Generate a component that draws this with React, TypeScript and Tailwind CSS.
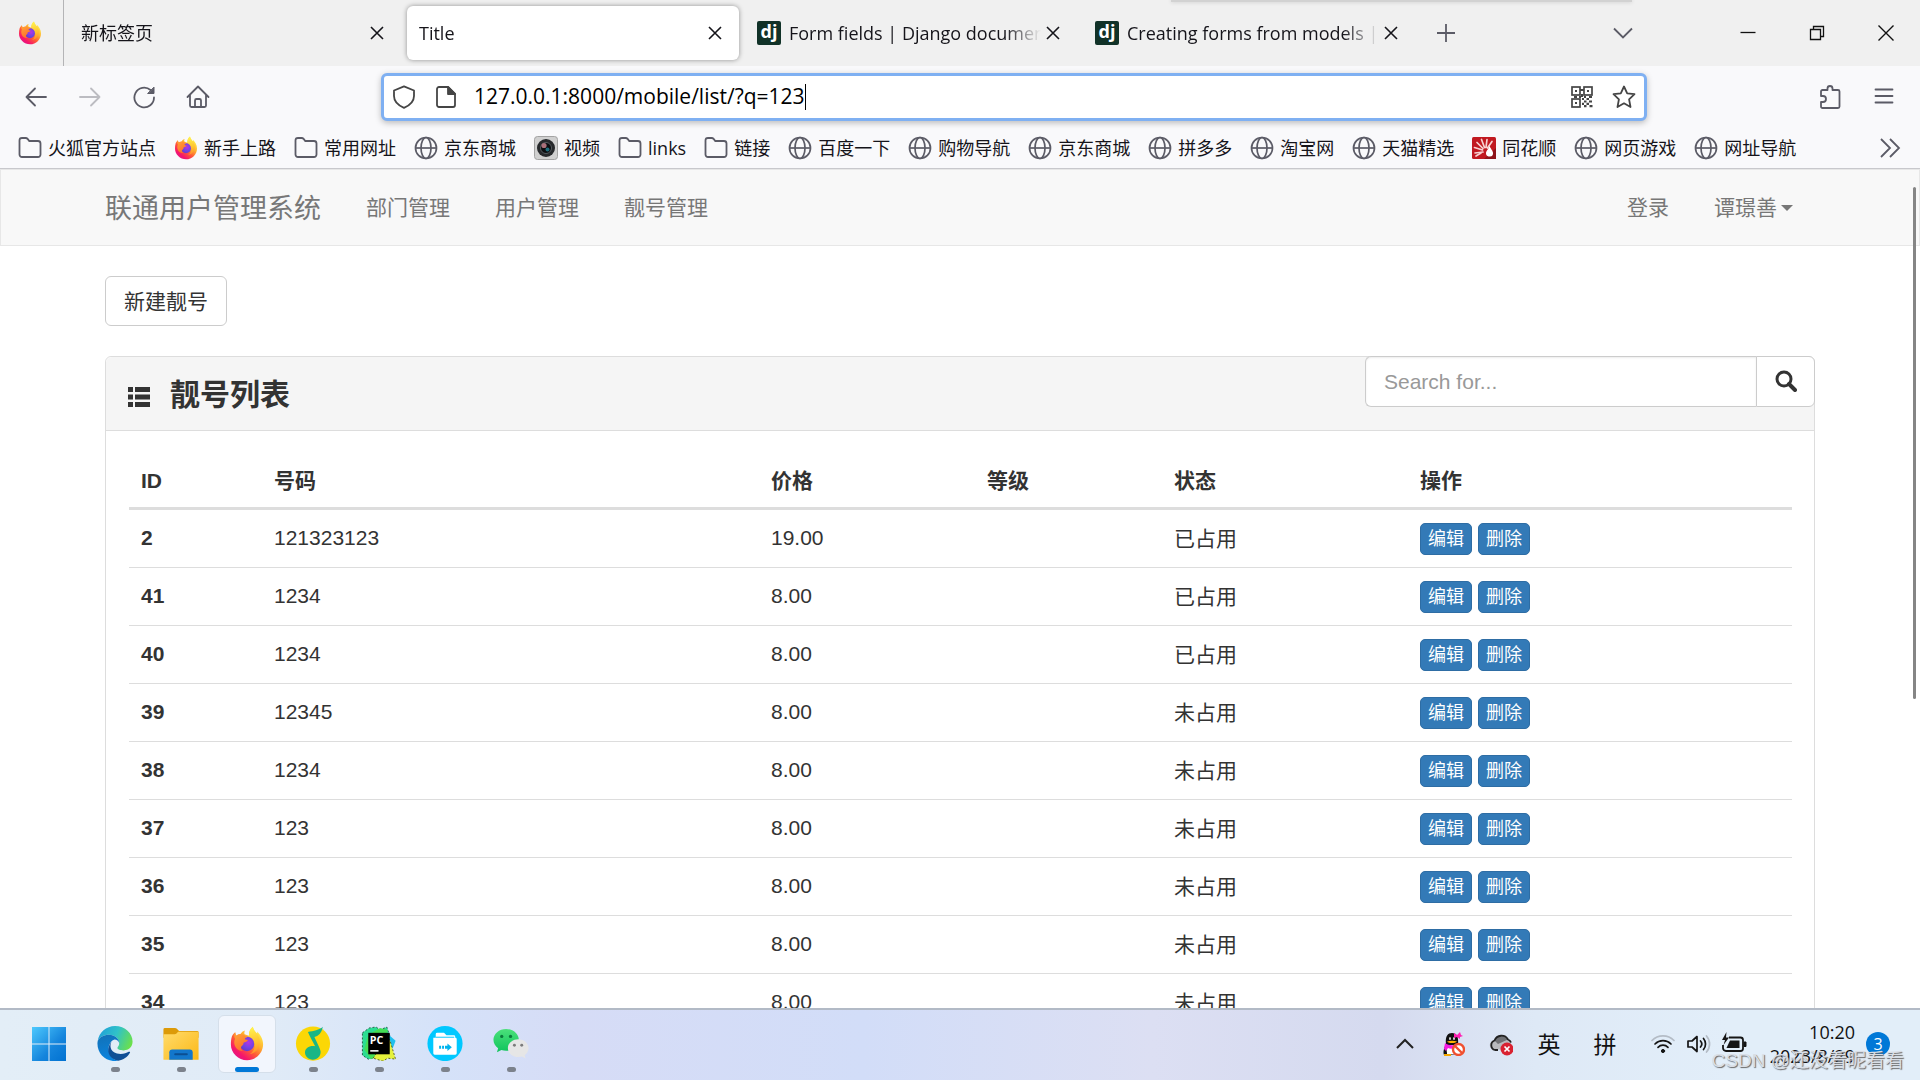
import type { ReactNode } from 'react';

interface Mobile {
  id: number;
  number: string;
  price: string;
  level: string;
  status: string;
}

const mobiles: Mobile[] = [
  { id: 2, number: '121323123', price: '19.00', level: '', status: '已占用' },
  { id: 41, number: '1234', price: '8.00', level: '', status: '已占用' },
  { id: 40, number: '1234', price: '8.00', level: '', status: '已占用' },
  { id: 39, number: '12345', price: '8.00', level: '', status: '未占用' },
  { id: 38, number: '1234', price: '8.00', level: '', status: '未占用' },
  { id: 37, number: '123', price: '8.00', level: '', status: '未占用' },
  { id: 36, number: '123', price: '8.00', level: '', status: '未占用' },
  { id: 35, number: '123', price: '8.00', level: '', status: '未占用' },
  { id: 34, number: '123', price: '8.00', level: '', status: '未占用' },
];

type BookmarkIcon = 'folder' | 'globe' | 'firefox' | 'camera' | 'stock';

const bookmarks: { icon: BookmarkIcon; label: string }[] = [
  { icon: 'folder', label: '火狐官方站点' },
  { icon: 'firefox', label: '新手上路' },
  { icon: 'folder', label: '常用网址' },
  { icon: 'globe', label: '京东商城' },
  { icon: 'camera', label: '视频' },
  { icon: 'folder', label: 'links' },
  { icon: 'folder', label: '链接' },
  { icon: 'globe', label: '百度一下' },
  { icon: 'globe', label: '购物导航' },
  { icon: 'globe', label: '京东商城' },
  { icon: 'globe', label: '拼多多' },
  { icon: 'globe', label: '淘宝网' },
  { icon: 'globe', label: '天猫精选' },
  { icon: 'stock', label: '同花顺' },
  { icon: 'globe', label: '网页游戏' },
  { icon: 'globe', label: '网址导航' },
];

/* ---------- Icons ---------- */

function FirefoxLogo({ className }: { className: string }) {
  return (
    <svg viewBox="0 0 36 36" className={className} aria-hidden="true">
      <defs>
        <linearGradient id="ffBody" x1="0.85" y1="0.1" x2="0.2" y2="0.95">
          <stop offset="0" stopColor="#fff44f" />
          <stop offset="0.35" stopColor="#ffb02e" />
          <stop offset="0.6" stopColor="#ff5a36" />
          <stop offset="0.85" stopColor="#f5156c" />
          <stop offset="1" stopColor="#e31587" />
        </linearGradient>
        <radialGradient id="ffGlobe" cx="0.6" cy="0.4" r="0.7">
          <stop offset="0" stopColor="#b833e1" />
          <stop offset="0.5" stopColor="#7542e5" />
          <stop offset="1" stopColor="#5b3fc4" />
        </radialGradient>
        <linearGradient id="ffHead" x1="0.2" y1="0" x2="0.7" y2="1">
          <stop offset="0" stopColor="#ffa436" />
          <stop offset="1" stopColor="#ff6a2b" />
        </linearGradient>
        <linearGradient id="ffFlame" x1="0.5" y1="0" x2="0.6" y2="1">
          <stop offset="0" stopColor="#fff44f" />
          <stop offset="0.6" stopColor="#ffc02e" />
          <stop offset="1" stopColor="#ff8a2b" />
        </linearGradient>
      </defs>
      <path d="M2.6 10.5C3.4 8.6 4.6 7.2 5.9 6.3c0 1.2.4 2.5 1.2 3.6 1-.8 2.6-1.5 4.2-1.6C12.6 6 14.4 5 16 4.6c-.8 1.3-.9 2.6-.5 3.8L20 10c-.2-3.800 1-7 4-9.300.6 3 2.200 5 4.300 7 .2-.6.2-1.200 0-2 3.300 3 6.200 7.600 6.200 13 0 9-7.300 16.300-16.400 16.300S1.500 27.700 1.500 18.900c0-3 .2-5.800 1.100-8.400z" fill="url(#ffBody)" />
      <path d="M20 10.500c-.3-4 1-7.400 4-9.800.8 4 3.400 6 5.400 9.300 2.300 3.800 2.500 9-.2 13.400-1.800 3-5 4.900-8.200 5.200 4.600-2.800 6-7.500 4.600-11.800-1-3-3-4.800-5.600-6.300z" fill="url(#ffFlame)" />
      <circle cx="18" cy="18.400" r="7.400" fill="url(#ffGlobe)" />
      <path d="M5.900 6.300c0 1.200.4 2.500 1.200 3.600 2.200-1.500 5-1.900 7.600-.9 1.200.6 2.500 1.700 3.400 3-1.400 0-2.400.5-2.200 1.500.8.500 2 .8 3.100.8-.7 1.500-2.400 2.300-4.600 2.900.2 1.400-.4 2.300-1.400 3-2 1.600-1.200 4 1 5.400-4.300.3-8.500-2.800-9-7.600-.2-2.200.3-3.700.9-4.700-1.200-2-1.200-4.800 0-7z" fill="url(#ffHead)" />
    </svg>
  );
}

function DjangoLogo() {
  return (
    <span className="flex h-6 w-6 shrink-0 items-center justify-center rounded-xs bg-[#113228] pb-1 text-lg leading-5 font-bold text-white">
      dj
    </span>
  );
}

function CloseIcon() {
  return (
    <svg viewBox="0 0 24 24" className="h-6 w-6" fill="none" stroke="#15141a" strokeWidth="1.600">
      <path d="M6 6l12 12M18 6L6 18" />
    </svg>
  );
}

function GlobeIcon() {
  return (
    <svg viewBox="0 0 24 24" className="h-6 w-6" fill="none" stroke="#5b5b66" strokeWidth="1.700">
      <circle cx="12" cy="12" r="10.500" />
      <ellipse cx="12" cy="12" rx="5" ry="10.500" />
      <path d="M1.500 12h21" />
    </svg>
  );
}

function FolderIcon() {
  return (
    <svg viewBox="0 0 24 24" className="h-6 w-6" fill="none" stroke="#5b5b66" strokeWidth="1.800">
      <path d="M1.500 18.500v-14A2.500 2.500 0 0 1 4 2h3.600c.8 0 1.500.3 2 .9L11.300 5h8.700A2.500 2.500 0 0 1 22.500 7.500v11A2.500 2.500 0 0 1 20 21H4a2.500 2.500 0 0 1-2.500-2.500z" />
    </svg>
  );
}

function CameraIcon() {
  return (
    <svg viewBox="0 0 24 24" className="h-6 w-6">
      <rect x="0.500" y="0.500" width="23" height="23" rx="3" fill="#d0d0d0" stroke="#a3a3a3" />
      <circle cx="12" cy="12" r="9" fill="#26282b" />
      <circle cx="12" cy="12" r="5.500" fill="#0b0d10" stroke="#555b60" />
      <circle cx="10" cy="9.500" r="2.600" fill="#a9707a" />
      <circle cx="13.500" cy="13.500" r="2" fill="#1d6c7c" />
    </svg>
  );
}

function StockIcon() {
  return (
    <svg viewBox="0 0 24 24" className="h-6 w-6">
      <rect y="1" width="24" height="22" rx="1.500" fill="#c11920" />
      <path d="M12 23h12V12z" fill="#8e1419" />
      <g stroke="#f7d3d3" strokeWidth="1.700" fill="none" strokeLinecap="round">
        <path d="M11 16L3 17M10.500 14L2.500 11.500M11 12.500L5 6.500M12.500 11.500L9.500 3.500M14 11.500L15 3.500M15.500 12L20 5.500" />
        <path d="M9 17l-5 3" />
      </g>
      <path d="M17.500 10c2 4 4 5.500 3.500 8s-2.500 2.500-3.500 2.500-3.500-.5-3.500-3 2-3.500 3.500-7.500z" fill="#fff" />
    </svg>
  );
}

function BookmarkGlyph({ icon }: { icon: BookmarkIcon }) {
  if (icon === 'folder') return <FolderIcon />;
  if (icon === 'globe') return <GlobeIcon />;
  if (icon === 'camera') return <CameraIcon />;
  if (icon === 'stock') return <StockIcon />;
  return <FirefoxLogo className="h-6 w-6" />;
}

function QrIcon() {
  return (
    <svg viewBox="0 0 24 24" className="h-6 w-6" fill="none" stroke="#454545" strokeWidth="1.700">
      <rect x="2" y="2" width="8" height="8" />
      <rect x="14" y="2" width="8" height="8" />
      <rect x="2" y="14" width="8" height="8" />
      <path d="M5 6h2M17 6h2M5 18h2" strokeWidth="2" />
      <path d="M10 5h4M4 12h3M9 12h2M14 12h2M19 12h3M12 14h2M16.500 14h2.500M14 16.500h2.500M19 16.500h3M12 18.800h2M16.500 18.800h2.500M14 21.200h2.500M19.500 21.200h3M12 9v3" strokeWidth="2.200" />
    </svg>
  );
}

/* ---------- Browser chrome ---------- */

interface TabProps {
  title: string;
  icon?: ReactNode;
  active?: boolean;
}

function Tab({ title, icon, active }: TabProps) {
  return (
    <div className="flex h-full w-[338px] min-w-0 items-stretch px-[3px] py-[6px]">
      <div
        className={`flex min-w-0 flex-1 items-center rounded-md px-3 ${
          active ? 'bg-white shadow-[0_0_5px_rgba(0,0,0,0.4)]' : ''
        }`}
      >
        {icon && <span className="mr-2 flex">{icon}</span>}
        <span className="min-w-0 flex-1 overflow-hidden text-lg whitespace-nowrap [mask-image:linear-gradient(to_left,transparent,black_36px)]">
          {title}
        </span>
        <button type="button" aria-label="关闭标签页" className="shrink-0">
          <CloseIcon />
        </button>
      </div>
    </div>
  );
}

function TabBar() {
  return (
    <div className="relative flex h-[66px] items-center bg-[#f0f0f0]">
      <div className="absolute top-0 right-[15%] left-[61%] h-[2px] bg-[#d2d2d2] shadow-[0_0_4px_rgba(0,0,0,0.2)]" />
      <button type="button" aria-label="Firefox View" className="mr-[2px] flex h-full w-16 items-center border-r border-[#b4b4b6] pl-[18px]">
        <FirefoxLogo className="h-6 w-6" />
      </button>
      <Tab title="新标签页" />
      <Tab title="Title" active />
      <Tab title="Form fields | Django documentation" icon={<DjangoLogo />} />
      <Tab title="Creating forms from models | Django documentation" icon={<DjangoLogo />} />
      <button type="button" aria-label="新建标签页" className="flex w-14 justify-center">
        <svg viewBox="0 0 24 24" className="h-6 w-6" fill="none" stroke="#5b5b66" strokeWidth="1.800">
          <path d="M12 3v18M3 12h18" />
        </svg>
      </button>
      <div className="ml-auto flex h-full items-center">
        <button type="button" aria-label="列出所有标签页" className="mr-[62px] flex w-14 justify-center">
          <svg viewBox="0 0 24 24" className="h-6 w-6" fill="none" stroke="#5b5b66" strokeWidth="1.800">
            <path d="M3 7.500l9 9 9-9" />
          </svg>
        </button>
        <button type="button" aria-label="最小化" className="flex w-[69px] justify-center">
          <svg viewBox="0 0 24 24" className="h-6 w-6" fill="none" stroke="#111" strokeWidth="1.300">
            <path d="M4.500 11.500h15" />
          </svg>
        </button>
        <button type="button" aria-label="还原" className="flex w-[69px] justify-center">
          <svg viewBox="0 0 24 24" className="h-6 w-6" fill="none" stroke="#111" strokeWidth="1.300">
            <path d="M5.500 8.500h10v10h-10zM8.500 8.500v-3h10v10h-3" />
          </svg>
        </button>
        <button type="button" aria-label="关闭" className="flex w-[69px] justify-center">
          <svg viewBox="0 0 24 24" className="h-6 w-6" fill="none" stroke="#111" strokeWidth="1.400">
            <path d="M4.500 4.500l15 15M19.500 4.500l-15 15" />
          </svg>
        </button>
      </div>
    </div>
  );
}

function ToolButton({ label, children }: { label: string; children: ReactNode }) {
  return (
    <button type="button" aria-label={label} className="flex w-[54px] shrink-0 justify-center">
      <svg
        viewBox="0 0 24 24"
        className="h-6 w-6"
        fill="none"
        stroke="#5b5b66"
        strokeWidth="1.800"
        strokeLinecap="round"
        strokeLinejoin="round"
      >
        {children}
      </svg>
    </button>
  );
}

function Toolbar() {
  return (
    <div className="flex h-[61px] items-center bg-[#f9f9fb] px-[9px]">
      <ToolButton label="后退">
        <path d="M22 12H2.500M11 3.500L2.500 12l8.500 8.500" />
      </ToolButton>
      <ToolButton label="前进">
        <path d="M2 12h19.500M13 3.500l8.500 8.500-8.500 8.500" stroke="#bcbcc1" />
      </ToolButton>
      <ToolButton label="刷新">
        <path d="M22 12.500a9.800 9.800 0 1 1-3.500-7.500" />
        <path d="M22 2.500v6h-6z" fill="#5b5b66" strokeWidth="1" />
      </ToolButton>
      <ToolButton label="主页">
        <path d="M1.500 12L12 1.500 22.500 12M4 10v10.500A1.500 1.500 0 0 0 5.500 22h13a1.500 1.500 0 0 0 1.500-1.500V10" />
        <path d="M9 22v-6.500a1.500 1.500 0 0 1 1.500-1.500h3a1.500 1.500 0 0 1 1.500 1.500V22" />
      </ToolButton>

      {/* Address bar */}
      <div className="mx-[156px] flex h-12 min-w-0 flex-1 items-center rounded-md border-[3px] border-[#7fb0f2] bg-white px-2 shadow-[0_2px_6px_rgba(0,0,0,0.25)]">
        <svg viewBox="0 0 24 24" className="h-6 w-6 shrink-0" fill="none" stroke="#454545" strokeWidth="1.800" strokeLinejoin="round">
          <path d="M12 1.300l10 4.200v5.500c0 6-4.500 9.500-10 11.800C6.500 20.500 2 17 2 11V5.500z" />
        </svg>
        <svg viewBox="0 0 24 24" className="ml-[18px] h-6 w-6 shrink-0" fill="none" stroke="#454545" strokeWidth="1.800" strokeLinejoin="round">
          <path d="M5 2h9l7 7v11a2 2 0 0 1-2 2H5a2 2 0 0 1-2-2V4a2 2 0 0 1 2-2z" />
          <path d="M14 2v7h7z" fill="#454545" />
        </svg>
        <input
          type="text"
          aria-label="地址"
          defaultValue="127.0.0.1:8000/mobile/list/?q=123"
          className="ml-4 field-sizing-content bg-transparent text-[21px] text-black outline-none"
        />
        <span className="h-[26px] w-px bg-black" />
        <button type="button" aria-label="二维码" className="ml-auto">
          <QrIcon />
        </button>
        <button type="button" aria-label="收藏" className="ml-[18px]">
          <svg viewBox="0 0 24 24" className="h-6 w-6" fill="none" stroke="#454545" strokeWidth="1.800" strokeLinejoin="round">
            <path d="M12 1.500l3.200 6.800 7.300.9-5.400 5.100 1.400 7.700L12 18.300 5.500 22l1.400-7.700L1.500 9.200l7.300-.9z" />
          </svg>
        </button>
      </div>

      <ToolButton label="扩展">
        <path d="M3 9V6.500A1.500 1.500 0 0 1 4.500 5h5V3.500a2.500 2.500 0 0 1 5 0V5h5.500A1.500 1.500 0 0 1 21.500 6.500v15A1.500 1.500 0 0 1 20 23H4.500A1.500 1.500 0 0 1 3 21.500V17h2a3 3 0 0 0 0-6H3z" />
      </ToolButton>
      <ToolButton label="菜单">
        <path d="M3.500 4.500h17M3.500 11h17M3.500 17.500h17" />
      </ToolButton>
    </div>
  );
}

function BookmarkBar() {
  return (
    <nav className="flex h-[42px] items-center gap-[18px] border-b border-[#c8c8cc] bg-[#f9f9fb] pr-[18px] pl-[18px]">
      {bookmarks.map((item, i) => (
        <a key={i} href="#" className="flex shrink-0 items-center gap-[6px] text-lg whitespace-nowrap text-[#15141a]">
          <BookmarkGlyph icon={item.icon} />
          {item.label}
        </a>
      ))}
      <button type="button" aria-label="更多书签" className="ml-auto">
        <svg viewBox="0 0 24 24" className="h-6 w-6" fill="none" stroke="#5b5b66" strokeWidth="1.800">
          <path d="M3 3l9 9-9 9M12 3l9 9-9 9" />
        </svg>
      </button>
    </nav>
  );
}

/* ---------- Page ---------- */

function Navbar() {
  return (
    <nav className="border border-[#e7e7e7] bg-[#f8f8f8] text-[21px] text-[#777]">
      <div className="mx-auto flex h-[75px] w-full max-w-[1710px] items-center">
        <a href="#" className="mr-[45px] pt-[3px] text-[27px]">联通用户管理系统</a>
        <div className="flex gap-[45px]">
          <a href="#">部门管理</a>
          <a href="#">用户管理</a>
          <a href="#">靓号管理</a>
        </div>
        <div className="mr-[22px] ml-auto flex gap-[45px]">
          <a href="#">登录</a>
          <a href="#" className="flex items-center gap-1">
            谭璟善
            <span className="border-x-6 border-t-6 border-x-transparent border-t-[#777]" />
          </a>
        </div>
      </div>
    </nav>
  );
}

function ActionLink({ children }: { children: ReactNode }) {
  return (
    <a
      href="#"
      className="flex h-8 items-center rounded-[5px] border border-[#2e6da4] bg-[#337ab7] px-[7px] text-lg leading-none text-white"
    >
      {children}
    </a>
  );
}

function MobileTable() {
  return (
    <table className="w-full table-fixed border-separate border-spacing-0 text-left">
      <colgroup>
        <col className="w-[133px]" />
        <col className="w-[497px]" />
        <col className="w-[216px]" />
        <col className="w-[187px]" />
        <col className="w-[246px]" />
        <col />
      </colgroup>
      <thead>
        <tr>
          {['ID', '号码', '价格', '等级', '状态', '操作'].map((name) => (
            <th key={name} className="border-b-3 border-[#ddd] px-3 pt-[13px] pb-[11px] leading-[30px] font-bold">
              {name}
            </th>
          ))}
        </tr>
      </thead>
      <tbody>
        {mobiles.map((m) => (
          <tr key={m.id} className="h-[58px]">
            <th className="border-b border-[#ddd] px-3 pb-[2px] font-bold">{m.id}</th>
            <td className="border-b border-[#ddd] px-3 pb-[2px]">{m.number}</td>
            <td className="border-b border-[#ddd] px-3 pb-[2px]">{m.price}</td>
            <td className="border-b border-[#ddd] px-3 pb-[2px]">{m.level}</td>
            <td className="border-b border-[#ddd] px-3">{m.status}</td>
            <td className="border-b border-[#ddd] px-3">
              <div className="flex gap-[6px] pt-px">
                <ActionLink>编辑</ActionLink>
                <ActionLink>删除</ActionLink>
              </div>
            </td>
          </tr>
        ))}
      </tbody>
    </table>
  );
}

function MobileList() {
  return (
    <div className="mx-auto w-full max-w-[1710px] pt-[30px] text-[21px] leading-[30px] text-[#333]">
      <a href="#" className="inline-flex h-[50px] items-center rounded-md border border-[#ccc] bg-white px-[18px] pt-px">
        新建靓号
      </a>

      <section className="mt-[30px] rounded-md border border-[#ddd] bg-white">
        {/* Panel heading */}
        <div className="flex items-start justify-between rounded-t-md border-b border-[#ddd] bg-[#f5f5f5]">
          <h3 className="flex items-center pt-[21px] pb-[19px] pl-[22px] text-3xl leading-[33px] font-bold">
            <svg viewBox="0 0 22 20" className="mt-1 mr-5 h-5 w-[22px]" fill="#333">
              <path d="M0 0h5v5H0zM7 0h15v5H7zM0 7.500h5v5H0zM7 7.500h15v5H7zM0 15h5v5H0zM7 15h15v5H7z" />
            </svg>
            靓号列表
          </h3>
          <form className="-mt-px -mr-px flex h-[51px]" onSubmit={(e) => e.preventDefault()}>
            <input
              type="text"
              name="q"
              aria-label="Search"
              placeholder="Search for..."
              className="w-[391px] rounded-l-md border border-r-0 border-[#ccc] bg-white px-[18px] shadow-[inset_0_1px_2px_rgba(0,0,0,0.08)] outline-none placeholder:text-[#999]"
            />
            <button type="submit" aria-label="搜索" className="flex w-[59px] items-center justify-center rounded-r-md border border-[#ccc] bg-white pb-[2px]">
              <svg viewBox="0 0 22 22" className="h-[22px] w-[22px]" fill="none" stroke="#333">
                <circle cx="9" cy="9" r="7" strokeWidth="3" />
                <path d="M14 14l6 6" strokeWidth="4" strokeLinecap="round" />
              </svg>
            </button>
          </form>
        </div>

        <div className="py-[22px] pr-[22px] pl-[23px]">
          <MobileTable />
        </div>
      </section>
    </div>
  );
}

/* ---------- Taskbar ---------- */

function WindowsIcon() {
  return (
    <svg viewBox="0 0 36 36" className="h-9 w-9">
      <defs>
        <linearGradient id="winTile" x1="0" y1="0" x2="36" y2="36" gradientUnits="userSpaceOnUse">
          <stop offset="0" stopColor="#50ccff" />
          <stop offset="0.600" stopColor="#1484dc" />
          <stop offset="1" stopColor="#0070d0" />
        </linearGradient>
      </defs>
      <path d="M1 1h16.500v16.500H1zM18.500 1H35v16.500H18.500zM1 18.500h16.500V35H1zM18.500 18.500H35V35H18.500z" fill="url(#winTile)" />
    </svg>
  );
}

function EdgeIcon() {
  return (
    <svg viewBox="0 0 36 36" className="h-9 w-9">
      <defs>
        <linearGradient id="edgeTop" x1="0" y1="0.300" x2="1" y2="0.600">
          <stop offset="0" stopColor="#1f9fd8" />
          <stop offset="0.500" stopColor="#30c2c8" />
          <stop offset="1" stopColor="#6be04c" />
        </linearGradient>
        <linearGradient id="edgeSide" x1="0.300" y1="0" x2="0.500" y2="1">
          <stop offset="0" stopColor="#1272b8" />
          <stop offset="1" stopColor="#0a84e0" />
        </linearGradient>
      </defs>
      <path d="M.3 15.500C1.500 6.500 9 0 18 0c10.500 0 18 7.500 18 16 0 5.500-4 9-9 9-4.500 0-6.500-1.500-6.500-2.500s1.800-1.800 1.800-4.700c0-5-4.800-8.800-10.300-8.800C6.500 9 2 11.500.3 15.500z" fill="url(#edgeTop)" />
      <path d="M.3 15.500C2 11.500 6.500 9 12 9c5.500 0 10.300 3.800 10.300 8.500-.6-2.300-2.500-3.700-4.800-3.700-3 .8-6 4.700-6 9.200 0 6 4 11.500 10 12.500C10 38 0 29.500 0 18c0-.9.1-1.700.3-2.500z" fill="url(#edgeSide)" />
      <path d="M14.500 16.500c-2 2.500-2 10 5.500 11.800 5 1.200 9.500-.3 12-1.800 1-.6 1.800.2 1.300 1-2.300 4.500-7 7.500-11.800 8C13 34.500 9.500 27 11.800 21c.6-2 1.500-3.500 2.700-4.500z" fill="#104f96" />
    </svg>
  );
}

function ExplorerIcon() {
  return (
    <svg viewBox="0 0 36 36" className="h-9 w-9">
      <defs>
        <linearGradient id="folderFront" x1="0" y1="0" x2="1" y2="1">
          <stop offset="0" stopColor="#ffdb6b" />
          <stop offset="1" stopColor="#fcb816" />
        </linearGradient>
      </defs>
      <path d="M0 3.500A1.500 1.500 0 0 1 1.500 2h10.300c.8 0 1.500.3 2 .8L16 5h18.500A1.500 1.500 0 0 1 36 6.500V12H0z" fill="#dc9a08" />
      <path d="M0 8.500h11.500c.8 0 1.300-.3 1.900-.8l1.600-1.700h21V34.500H0z" fill="url(#folderFront)" />
      <path d="M6 34.500V27a3 3 0 0 1 3-3h18a3 3 0 0 1 3 3v7.500z" fill="#1277cc" />
      <rect x="11" y="28" width="14" height="2" rx="1" fill="#0b4f92" />
    </svg>
  );
}

function MusicIcon() {
  return (
    <svg viewBox="0 0 36 36" className="h-9 w-9">
      <circle cx="18" cy="18" r="17.500" fill="#fbd706" />
      <path d="M28 .8c-3.500 3.400-9.500 4.200-15.200 5.400 2 4.700 4.700 9.500 7.400 14.500-5.500-1-10.400 1.800-10.400 6.500 0 4.200 3.700 7.300 8 7.300 4.900 0 8.200-3.800 8-8.200-.2-3.300-5-11.300-6.300-15C23.300 10.500 27 7.300 28 .8z" fill="#19b686" />
    </svg>
  );
}

function PyCharmIcon() {
  return (
    <svg viewBox="0 0 36 36" className="h-9 w-9">
      <path d="M1 7l7-5 7-1 4 3 7-3 3 9-4 8-9 14-9 2-6-4z" fill="#2cdc92" stroke="#14382d" strokeWidth="0.800" strokeDasharray="2 2" />
      <path d="M3 24l4-15 12-7 8 2-6 22-11 8z" fill="#45dd55" />
      <path d="M28 9l7 6-3 8-6-1z" fill="#1fc0ee" />
      <path d="M12 33l6-9 11-10 3 10 3 10-8-1-5 3z" fill="#e5f13c" stroke="#3b4214" strokeWidth="0.800" strokeDasharray="2 2" />
      <rect x="7" y="7" width="22" height="22" fill="#000" />
      <text x="8.500" y="18" fontSize="11" fontWeight="700" fill="#fff">PC</text>
      <path d="M9 25.500h8.500" stroke="#fff" strokeWidth="1.600" />
    </svg>
  );
}

function TransferIcon() {
  return (
    <svg viewBox="0 0 36 36" className="h-9 w-9">
      <circle cx="18" cy="18" r="18" fill="#00c8ff" />
      <path d="M8.500 8.500A1.500 1.500 0 0 1 10 7h7l2.500 2.500H27A1.500 1.500 0 0 1 28.500 11v1.500h-20z" fill="#fff" />
      <path d="M6 12h22.500A1.500 1.500 0 0 1 30 13.500V28a1.500 1.500 0 0 1-1.500 1.500h-21A1.500 1.500 0 0 1 6 28z" fill="#fff" />
      <path d="M8.500 11.500h19" stroke="#00c8ff" />
      <path d="M12 20.300h2v3h-2zM15 20.300h2v3h-2zM18 20.300h2.500V18l4.500 3.800-4.500 3.800v-2.300H18z" fill="#00b4ee" />
    </svg>
  );
}

function WeChatIcon() {
  return (
    <svg viewBox="0 0 36 36" className="h-9 w-9">
      <defs>
        <linearGradient id="wechatBubble" x1="0" y1="0" x2="0" y2="1">
          <stop offset="0" stopColor="#4be07a" />
          <stop offset="1" stopColor="#0fc45c" />
        </linearGradient>
      </defs>
      <path d="M13 3C5.800 3 0 8 0 14.200c0 3.500 1.900 6.600 4.800 8.600L3.600 27l4.600-2.400c1.500.5 3.100.7 4.800.7 7.200 0 13-5 13-11.100S20.200 3 13 3z" fill="url(#wechatBubble)" />
      <circle cx="8.500" cy="10.700" r="1.700" fill="#0b7a3c" />
      <circle cx="17.500" cy="10.700" r="1.700" fill="#0b7a3c" />
      <path d="M25.500 13.500c-6 0-10.700 4-10.700 9.100s4.700 9.200 10.700 9.200c1.300 0 2.500-.2 3.700-.5l3.800 1.900-1-3.300c2.500-1.700 4-4.300 4-7.300 0-5.100-4.600-9.100-10.500-9.100z" fill="#e6e6e6" />
      <circle cx="21.500" cy="19.800" r="1.500" fill="#7c7c7c" />
      <circle cx="29" cy="19.800" r="1.500" fill="#7c7c7c" />
    </svg>
  );
}

interface TaskProps {
  label: string;
  state?: 'idle' | 'running' | 'active';
  children: ReactNode;
}

function Task({ label, state = 'running', children }: TaskProps) {
  return (
    <button
      type="button"
      aria-label={label}
      className={`flex h-[58px] w-[58px] flex-col items-center rounded-md border pt-[10px] ${
        state === 'active' ? 'border-[#d5dfea] bg-[#f2f6fd]' : 'border-transparent'
      }`}
    >
      {children}
      {state === 'running' && <span className="mt-[6px] h-[5px] w-[9px] rounded-full bg-[#7c828c]" />}
      {state === 'active' && <span className="mt-[6px] h-[5px] w-6 rounded-full bg-[#0078d7]" />}
    </button>
  );
}

function Taskbar() {
  return (
    <footer className="relative flex h-[72px] shrink-0 items-center justify-between border-t-2 border-[#b2bac6] bg-[linear-gradient(to_right,#e3eef7_0%,#e0ebf7_14%,#d5e2f9_23%,#d6dcf6_30%,#d2ddf8_45%,#dcdff3_60%,#d5daef_72%,#dee9f6_80%,#e2eef9_90%)] pb-[2px]">
      <div className="flex gap-2 pl-5">
        <Task label="开始" state="idle"><WindowsIcon /></Task>
        <Task label="Edge"><EdgeIcon /></Task>
        <Task label="文件资源管理器"><ExplorerIcon /></Task>
        <Task label="Firefox" state="active"><FirefoxLogo className="h-9 w-9" /></Task>
        <Task label="QQ音乐"><MusicIcon /></Task>
        <Task label="PyCharm"><PyCharmIcon /></Task>
        <Task label="文件传输"><TransferIcon /></Task>
        <Task label="微信"><WeChatIcon /></Task>
      </div>

      {/* System tray */}
      <div className="flex items-center pr-[30px] text-[#111]">
        <svg viewBox="0 0 24 24" className="mr-6 h-6 w-6" fill="none" stroke="#222" strokeWidth="2">
          <path d="M4 16l8-8 8 8" />
        </svg>
        <svg viewBox="0 0 24 24" className="mr-6 h-6 w-6">
          <path d="M3 23c-1.500-3 .5-8 2-11C4 4 7 1 11 1s7 3 6 11c2 3 3 7 2 10z" fill="#111" />
          <path d="M6 21c-1-5 1-8 5-8s6 3 5 9H6z" fill="#fff" />
          <path d="M4 11c4 3 10 3 14 0l-1 4c-4 2-8 2-10 1l-2 3-2-2z" fill="#f51ae0" />
          <ellipse cx="9" cy="6.500" rx="1" ry="1.500" fill="#d8d8d8" />
          <ellipse cx="13" cy="6.500" rx="1" ry="1.500" fill="#d8d8d8" />
          <path d="M6 9.500c3-1 7-1 10 0-2 2-8 2-10 0z" fill="#ffb400" />
          <path d="M13 1l3 2 3-3 1 3 2 1-3 1v2l-3-2-3 1z" fill="#ff1fb4" />
          <path d="M3 22h7v2H3z" fill="#f5a800" />
          <circle cx="17.500" cy="17.500" r="5.500" fill="#fff" stroke="#f05030" strokeWidth="2.400" />
          <path d="M14 14l7 7" stroke="#f05030" strokeWidth="2.400" />
        </svg>
        <svg viewBox="0 0 24 24" className="mr-6 h-6 w-6">
          <path d="M5 17.500a4.500 4.500 0 0 1 .5-9A7.500 7.500 0 0 1 19 7.500a5 5 0 0 1 3 5l-3 5z" fill="#b9babd" />
          <path d="M5.500 8.500A7.500 7.500 0 0 1 19 7.500L9 12z" fill="#707174" />
          <path d="M9 18H6a5 5 0 0 1-.5-9.500A7.500 7.500 0 0 1 19 7.500c1.500.6 2.500 1.500 3 3" fill="none" stroke="#222" strokeWidth="1.800" />
          <circle cx="18" cy="17" r="6.500" fill="#d92231" />
          <path d="M15.500 14.500l5 5M20.500 14.500l-5 5" stroke="#fff" strokeWidth="1.700" />
        </svg>
        <span className="mr-8 w-6 text-center text-[23px] leading-8">英</span>
        <span className="mr-[34px] w-6 text-center text-[23px] leading-8">拼</span>
        <svg viewBox="0 0 24 24" className="mr-3 h-6 w-6" fill="none" stroke="#151515" strokeWidth="1.700" strokeLinecap="round">
          <path d="M1 8.500a15.500 15.500 0 0 1 22 0" stroke="#b4bcc6" />
          <path d="M4 12a11.300 11.300 0 0 1 16 0M7 15.300a7 7 0 0 1 10 0" />
          <circle cx="12" cy="19" r="1.600" fill="#151515" strokeWidth="1" />
        </svg>
        <svg viewBox="0 0 24 24" className="mr-[10px] h-6 w-6" fill="none" stroke="#151515" strokeWidth="1.700" strokeLinecap="round" strokeLinejoin="round">
          <path d="M1 9v6h4l5 4.500v-15L5 9z" />
          <path d="M13.500 9a4.500 4.500 0 0 1 0 6M16.500 6.500a8.500 8.500 0 0 1 0 11" />
          <path d="M19.500 4a12 12 0 0 1 0 16" stroke="#b4bcc6" />
        </svg>
        <svg viewBox="0 0 26 24" className="mr-[18px] h-6 w-[26px]" fill="none" stroke="#151515" strokeWidth="1.800">
          <path d="M8 5.500h11.500A2.500 2.500 0 0 1 22 8v8.500a2.500 2.500 0 0 1-2.500 2.500H5a3 3 0 0 1-3-3v-3" />
          <path d="M9 8.500h9.500v7.500H5.500z" fill="#151515" stroke="none" />
          <path d="M23 10h2v4.500h-2z" fill="#151515" strokeWidth="1" />
          <path d="M5.500 0L1 8h3l-1.500 5L8 5.500H5z" fill="#151515" stroke="none" />
        </svg>
        <div className="mr-[11px] w-[90px] text-right text-lg leading-6">
          <div>10:20</div>
          <div>2023/8/29</div>
        </div>
        <span className="flex h-6 w-6 items-center justify-center rounded-full bg-[#0078d7] text-base leading-none text-white">
          3
        </span>
      </div>

      <span className="absolute right-4 bottom-1 font-['Liberation_Sans','Noto_Sans_CJK_SC',sans-serif] text-[19px] leading-[30px] whitespace-nowrap text-[#d9dee5] [text-shadow:1px_1px_1px_#666]">
        CSDN @还没看昵看看
      </span>
    </footer>
  );
}

export default function App() {
  return (
    <div className="flex h-screen flex-col overflow-hidden bg-white font-['Open_Sans','Noto_Sans_CJK_SC',sans-serif] text-[#15141a]">
      <header className="shrink-0">
        <TabBar />
        <Toolbar />
        <BookmarkBar />
      </header>

      <main className="relative min-h-0 flex-1 overflow-hidden font-['Liberation_Sans','Noto_Sans_CJK_SC',sans-serif]">
        <Navbar />
        <MobileList />
        {/* Scrollbar thumb */}
        <div className="absolute top-[18px] right-1 h-[61%] w-[3px] rounded-full bg-[#858585]" />
      </main>

      <Taskbar />
    </div>
  );
}
